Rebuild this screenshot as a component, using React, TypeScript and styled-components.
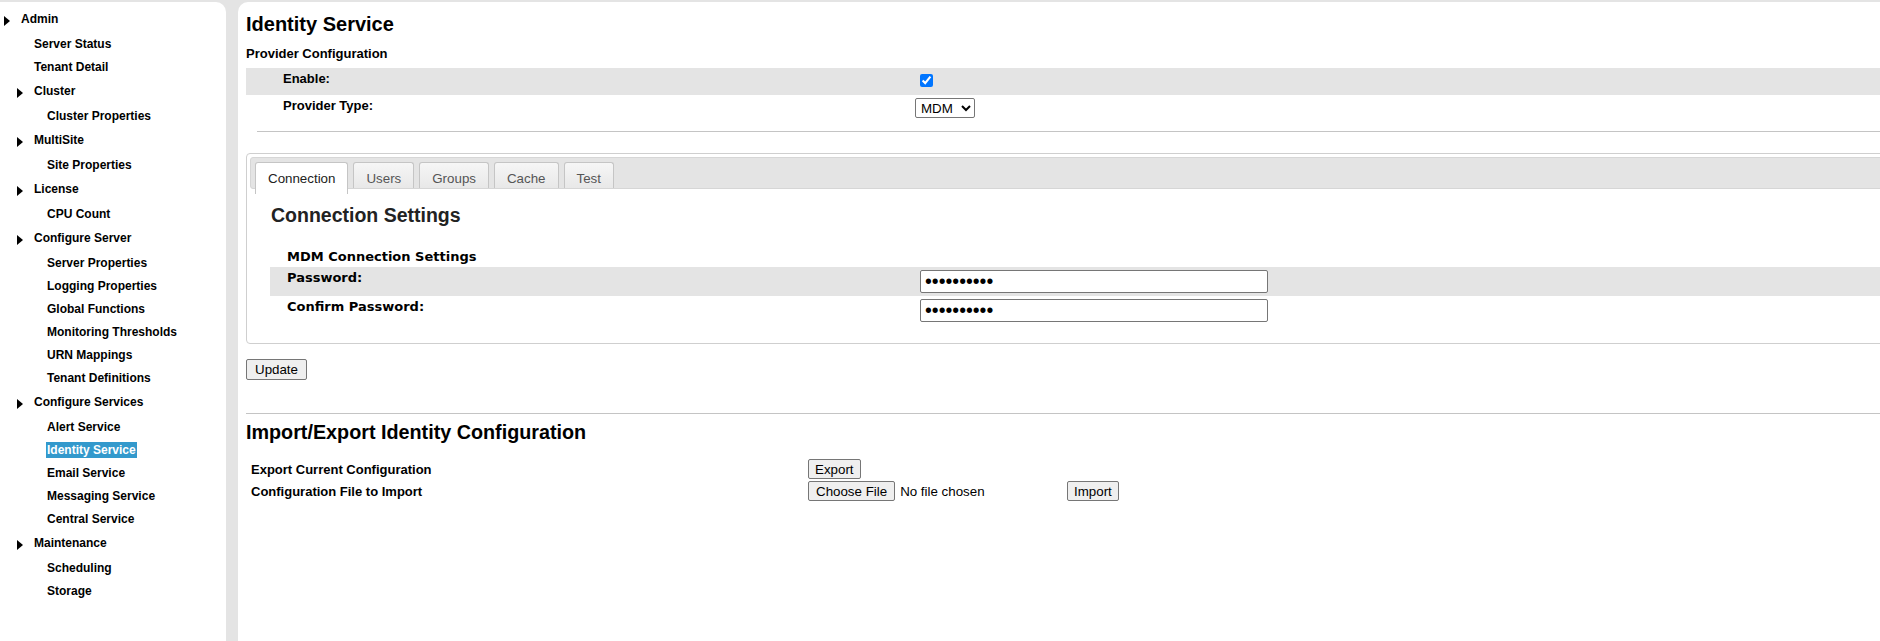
import * as React from "react";
import styled, { createGlobalStyle } from "styled-components";

const GlobalStyle = createGlobalStyle`
    html, body {
        margin: 0;
        overflow: hidden;
        background: #e4e4e4;
    }
    body {
        font-family: "Liberation Sans", Arial, sans-serif;
        color: #000;
    }
`;

const Shell = styled.div`
    display: flex;
    gap: 12px;
    width: calc(100% + 40px);
    height: 641px;
    padding-top: 2px;
    box-sizing: border-box;
`;

/* ---- navigation tree ---- */

const Sidebar = styled.nav`
    flex: none;
    width: 226px;
    background: #fff;
    border-top-right-radius: 10px;
    padding-top: 4px;
`;

const NavRow = styled.div<{ depth: number; branch: boolean }>`
    display: flex;
    align-items: center;
    height: ${props => props.branch ? 26 : 23}px;
    padding-left: ${props => 21 + props.depth * 13 - (props.branch ? 17 : 0)}px;
`;

const NavArrow = styled.span`
    flex: none;
    width: 17px;
    height: 10px;
    margin-top: 3px;
    &::before {
        content: "";
        display: block;
        width: 0;
        height: 0;
        border-left: 6px solid #000;
        border-top: 5px solid transparent;
        border-bottom: 5px solid transparent;
    }
`;

const NavLabel = styled.span<{ active?: boolean }>`
    display: inline-block;
    font-size: 12px;
    font-weight: bold;
    line-height: 16px;
    padding: 0 1px;
    margin-left: -1px;
    color: ${props => props.active ? "#fff" : "#000"};
    background: ${props => props.active ? "#3399cc" : "transparent"};
    cursor: pointer;
`;

interface NavItem {
    label: string;
    depth: number;
    branch?: boolean;
    active?: boolean;
}

const navItems: NavItem[] = [
    { label: "Admin", depth: 0, branch: true },
    { label: "Server Status", depth: 1 },
    { label: "Tenant Detail", depth: 1 },
    { label: "Cluster", depth: 1, branch: true },
    { label: "Cluster Properties", depth: 2 },
    { label: "MultiSite", depth: 1, branch: true },
    { label: "Site Properties", depth: 2 },
    { label: "License", depth: 1, branch: true },
    { label: "CPU Count", depth: 2 },
    { label: "Configure Server", depth: 1, branch: true },
    { label: "Server Properties", depth: 2 },
    { label: "Logging Properties", depth: 2 },
    { label: "Global Functions", depth: 2 },
    { label: "Monitoring Thresholds", depth: 2 },
    { label: "URN Mappings", depth: 2 },
    { label: "Tenant Definitions", depth: 2 },
    { label: "Configure Services", depth: 1, branch: true },
    { label: "Alert Service", depth: 2 },
    { label: "Identity Service", depth: 2, active: true },
    { label: "Email Service", depth: 2 },
    { label: "Messaging Service", depth: 2 },
    { label: "Central Service", depth: 2 },
    { label: "Maintenance", depth: 1, branch: true },
    { label: "Scheduling", depth: 2 },
    { label: "Storage", depth: 2 },
];

/* ---- main page ---- */

const Main = styled.main`
    flex: 1;
    min-width: 0;
    background: #fff;
    border-top-left-radius: 10px;
    padding: 10px 0 0 8px;
`;

const PageTitle = styled.h2<{ spaced?: boolean }>`
    margin: ${props => props.spaced ? "6px" : "0"} 0 0;
    font-size: ${props => props.spaced ? 19.75 : 20}px;
    line-height: 24px;
    font-weight: bold;
    color: #000;
`;

const SectionLabel = styled.div`
    margin-top: 10px;
    font-size: 13px;
    line-height: 16px;
    font-weight: bold;
`;

const FieldTable = styled.div<{ spacing: number }>`
    margin-top: ${props => props.spacing}px;
`;

const FieldRow = styled.div<{ shaded?: boolean; height: number; labelWidth: number }>`
    display: grid;
    grid-template-columns: ${props => props.labelWidth}px 1fr;
    align-items: start;
    box-sizing: border-box;
    height: ${props => props.height}px;
    padding-top: 3px;
    background: ${props => props.shaded ? "#e4e4e4" : "transparent"};
`;

const FieldLabel = styled.div<{ wide?: boolean }>`
    font-family: ${props => props.wide ? "\"DejaVu Sans\", Verdana, sans-serif" : "inherit"};
    font-size: 13px;
    line-height: 16px;
    font-weight: bold;
    padding-left: ${props => props.wide ? 17 : 37}px;
`;

const FieldValue = styled.div`
    display: flex;
    align-items: flex-start;
`;

const Check = styled.input`
    width: 13px;
    height: 13px;
    margin: 3px 0 0 5px;
`;

const Select = styled.select`
    height: 20px;
    width: 60px;
    padding: 0 1px;
    font-family: "Liberation Sans", Arial, sans-serif;
    font-size: 13.33px;
    color: #000;
    background: #fff;
    border: 1px solid #767676;
    border-radius: 2px;
`;

const Rule = styled.hr<{ spacing: number; inset?: number }>`
    margin: ${props => props.spacing}px 0 0 ${props => props.inset || 0}px;
    height: 0;
    border: none;
    border-top: 1px solid #c4c4c4;
`;

/* ---- tabs ---- */

const TabPanel = styled.div`
    margin-top: 21px;
    border: 1px solid #cfcfcf;
    border-radius: 4px;
    padding: 3px;
`;

const TabBar = styled.div`
    display: flex;
    align-items: flex-start;
    gap: 5px;
    padding: 4px 4px 0;
    background: #e4e4e4;
    border: 1px solid #d6d6d6;
    border-radius: 3px;
`;

const Tab = styled.div<{ active?: boolean }>`
    position: relative;
    box-sizing: border-box;
    height: ${props => props.active ? 32 : 26}px;
    margin-bottom: ${props => props.active ? -6 : 0}px;
    padding: 0 12px;
    border: 1px solid #c5c5c5;
    border-bottom: none;
    border-radius: 3px 3px 0 0;
    background: ${props => props.active ? "#fff" : "linear-gradient(#f6f6f6, #e8e8e8)"};
    color: ${props => props.active ? "#212121" : "#555"};
    font-size: 13.33px;
    line-height: 31px;
    cursor: pointer;
`;

const TabBody = styled.div`
    padding: 14px 0 15px 20px;
`;

const TabHeading = styled.h2`
    margin: 0 0 0 1px;
    font-size: 19.5px;
    line-height: 24px;
    font-weight: bold;
    color: #222;
`;

const Caption = styled.div`
    margin: 23px 0 3px 17px;
    font-family: "DejaVu Sans", Verdana, sans-serif;
    font-size: 13px;
    line-height: 14px;
    font-weight: bold;
`;

const PasswordInput = styled.input`
    box-sizing: border-box;
    width: 348px;
    height: 23px;
    margin-left: 2px;
    padding: 0 4px;
    font-family: "Liberation Sans", Arial, sans-serif;
    font-size: 19.5px;
    border: 1px solid #767676;
    border-radius: 2px;
    background: #fff;
`;

/* ---- buttons and import/export ---- */

const Button = styled.button<{ spacing?: number }>`
    box-sizing: border-box;
    height: ${props => props.spacing ? 21 : 20}px;
    margin-top: ${props => props.spacing || 0}px;
    padding: 0 ${props => props.spacing ? 8 : 6}px;
    font-family: "Liberation Sans", Arial, sans-serif;
    font-size: 13.33px;
    color: #000;
    background: #efefef;
    border: 1px solid #767676;
    border-radius: 2px;
`;

const ImportTable = styled.div`
    margin-top: 14px;
`;

const ImportRow = styled.div`
    display: grid;
    grid-template-columns: 562px auto;
    justify-content: start;
    align-items: center;
    height: 22px;
`;

const ImportLabel = styled.div`
    padding-left: 5px;
    font-size: 13px;
    font-weight: bold;
`;

const ImportControls = styled.div`
    display: flex;
    align-items: center;
    gap: 4px;
`;

const FileInput = styled.input`
    width: 255px;
    font-family: "Liberation Sans", Arial, sans-serif;
    font-size: 13.33px;
    color: #000;
    &::file-selector-button {
        box-sizing: border-box;
        height: 20px;
        margin-right: 5px;
        padding: 0 7px;
        font-family: "Liberation Sans", Arial, sans-serif;
        font-size: 13.33px;
        background: #efefef;
        border: 1px solid #767676;
        border-radius: 2px;
    }
`;

const tabs = ["Connection", "Users", "Groups", "Cache", "Test"];

export default function App() {
    return (
        <>
            <GlobalStyle />
            <Shell>
                <Sidebar>
                    {navItems.map(item => (
                        <NavRow key={item.label} depth={item.depth} branch={!!item.branch}>
                            {item.branch && <NavArrow />}
                            <NavLabel active={item.active}>{item.label}</NavLabel>
                        </NavRow>
                    ))}
                </Sidebar>

                <Main>
                    <PageTitle>Identity Service</PageTitle>
                    <SectionLabel>Provider Configuration</SectionLabel>

                    <FieldTable spacing={6}>
                        <FieldRow shaded height={27} labelWidth={669}>
                            <FieldLabel>Enable:</FieldLabel>
                            <FieldValue>
                                <Check type="checkbox" defaultChecked />
                            </FieldValue>
                        </FieldRow>
                        <FieldRow height={26} labelWidth={669}>
                            <FieldLabel>Provider Type:</FieldLabel>
                            <FieldValue>
                                <Select defaultValue="MDM">
                                    <option value="MDM">MDM</option>
                                    <option value="LDAP">LDAP</option>
                                </Select>
                            </FieldValue>
                        </FieldRow>
                    </FieldTable>

                    <Rule spacing={10} inset={11} />

                    <TabPanel>
                        <TabBar>
                            {tabs.map((tab, i) => (
                                <Tab key={tab} active={i === 0}>{tab}</Tab>
                            ))}
                        </TabBar>
                        <TabBody>
                            <TabHeading>Connection Settings</TabHeading>
                            <Caption>MDM Connection Settings</Caption>
                            <FieldRow shaded height={29} labelWidth={648}>
                                <FieldLabel wide>Password:</FieldLabel>
                                <FieldValue>
                                    <PasswordInput type="password" defaultValue="mdmadmin01" />
                                </FieldValue>
                            </FieldRow>
                            <FieldRow height={29} labelWidth={648}>
                                <FieldLabel wide>Confirm Password:</FieldLabel>
                                <FieldValue>
                                    <PasswordInput type="password" defaultValue="mdmadmin01" />
                                </FieldValue>
                            </FieldRow>
                        </TabBody>
                    </TabPanel>

                    <Button spacing={15}>Update</Button>

                    <Rule spacing={33} />

                    <PageTitle spaced>Import/Export Identity Configuration</PageTitle>

                    <ImportTable>
                        <ImportRow>
                            <ImportLabel>Export Current Configuration</ImportLabel>
                            <ImportControls>
                                <Button>Export</Button>
                            </ImportControls>
                        </ImportRow>
                        <ImportRow>
                            <ImportLabel>Configuration File to Import</ImportLabel>
                            <ImportControls>
                                <FileInput type="file" />
                                <Button>Import</Button>
                            </ImportControls>
                        </ImportRow>
                    </ImportTable>
                </Main>
            </Shell>
        </>
    );
}
